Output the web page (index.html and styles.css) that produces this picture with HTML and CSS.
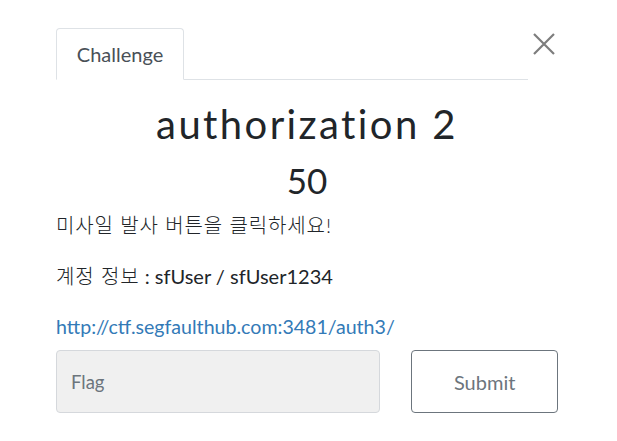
FILE: index.html
```html
<!DOCTYPE html>
<html lang="ko">
<head>
<meta charset="utf-8">
<link rel="stylesheet" href="styles.css">
</head>
<body>
<div class="modal">
  <div class="head">
    <div class="tabs"><div class="tab">Challenge</div></div>
    <div class="close"><svg width="22" height="22" viewBox="0 0 22 22"><path d="M1 1L21 21M21 1L1 21" stroke="#7d7d7d" stroke-width="2.2" fill="none"/></svg></div>
  </div>
  <h2 class="title">authorization 2</h2>
  <h3 class="value">50</h3>
  <p class="desc"><span class="ko">미사일 발사 버튼을 클릭하세요!</span></p>
  <p class="desc"><span class="ko">계정 정보</span> : sfUser / sfUser1234</p>
  <p class="desc last"><a class="link" href="#">http://ctf.segfaulthub.com:3481/auth3/</a></p>
  <div class="form">
    <div class="input">Flag</div>
    <div class="btn">Submit</div>
  </div>
</div>
</body>
</html>
```
FILE: styles.css
```css
html, body { margin: 0; padding: 0; background: #fff; }
body { font-family: Lato, "Noto Sans CJK KR", sans-serif; color: #212529; }
.modal { width: 502px; padding: 28px 0 0 56px; }
.head { display: flex; align-items: flex-start; }
.tabs { width: 472px; border-bottom: 1px solid #dee2e6; display: flex; }
.tab { box-sizing: border-box; width: 128px; height: 52px; margin-bottom: -1px; border: 1px solid #dee2e6; border-bottom-color: #fff; border-radius: 4px 4px 0 0; display: flex; align-items: center; justify-content: center; font-size: 20px; color: #495057; background: #fff; }
.close { padding: 5px 0 0 5px; }
.close svg { display: block; }
.title { margin: 22px 0 0; text-align: center; font-weight: 400; font-size: 40px; letter-spacing: 2.4px; line-height: 44px; }
.value { margin: 14px 0 10px; text-align: center; font-weight: 400; font-size: 35px; line-height: 40px; }
.desc { margin: 0 0 21px; font-size: 20px; line-height: 30px; }
.desc.last { margin-bottom: 8px; font-size: 19.6px; }
.ko { letter-spacing: 0.9px; font-weight: 300; }
.link { color: #337ab7; text-decoration: none; }
.form { display: flex; gap: 31px; }
.input { box-sizing: border-box; width: 325px; height: 63px; background: #f0f0f0; border: 1px solid #d5d8dc; border-radius: 4px; display: flex; align-items: center; padding-left: 14px; font-size: 18.5px; color: #6c757d; }
.btn { box-sizing: border-box; width: 147px; height: 63px; border: 1px solid #6c757d; border-radius: 4px; display: flex; align-items: center; justify-content: center; font-size: 20px; color: #6c757d; }
```
